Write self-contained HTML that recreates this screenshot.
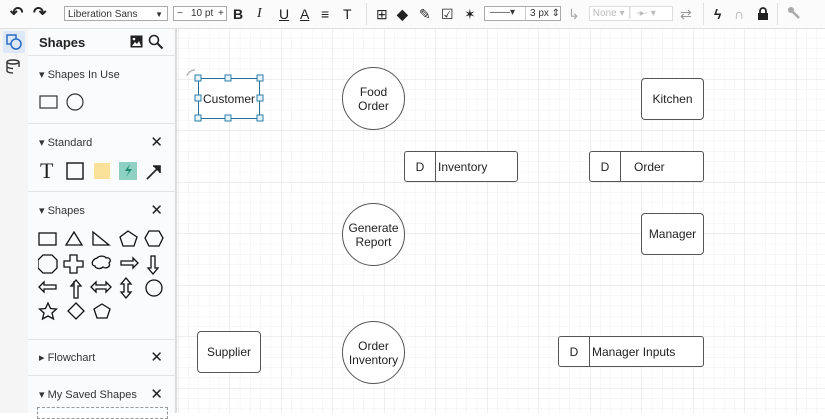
<!DOCTYPE html><html><head><style>
body{margin:0;width:825px;height:413px;overflow:hidden;font-family:"Liberation Sans",sans-serif;background:#fff;position:relative}
.tb{position:absolute;left:0;top:0;width:825px;height:28px;background:#fbfbfb;border-bottom:1px solid #e0e0e0}
.a{position:absolute}
.ico{position:absolute;top:6px;font-size:14px;color:#222;font-weight:bold}
.rail{position:absolute;left:0;top:29px;width:28px;height:384px;background:#f5f5f5;border-right:1px solid #e4e4e4}
.panel{position:absolute;left:28px;top:29px;width:147px;height:384px;background:#fafbfc;border-right:2px solid #dcdcdc}
.sec{position:absolute;left:0;width:147px;border-top:1px solid #e3e3e3;font-size:11px;color:#333}
.x{position:absolute;right:12px;font-size:15px;color:#222}
.box{position:absolute;border:1.5px solid #555;border-radius:4px;background:#fff;font-size:12px;color:#222;display:flex;align-items:center;justify-content:center;box-sizing:border-box}
.circ{position:absolute;border:1.5px solid #555;border-radius:50%;background:#fff;font-size:12px;color:#222;display:flex;align-items:center;justify-content:center;text-align:center;line-height:14px;box-sizing:border-box}
.d{position:absolute;border:1.5px solid #555;border-radius:3px;background:#fff;font-size:12px;color:#222;box-sizing:border-box}
.d span{position:absolute;top:0;bottom:0;display:flex;align-items:center}
</style></head><body>
<svg class="a" style="left:177px;top:29px" width="648" height="384">
<defs><pattern id="m" x="1.5" y="-1" width="10.3" height="10.3" patternUnits="userSpaceOnUse"><path d="M10.3 0V10.3H0" fill="none" stroke="#efefef" stroke-width="1"/></pattern>
<pattern id="M" x="1.5" y="-1" width="51.5" height="51.5" patternUnits="userSpaceOnUse"><path d="M51.5 0V51.5H0" fill="none" stroke="#dedede" stroke-width="1"/></pattern></defs>
<rect width="648" height="384" fill="url(#m)"/><rect width="648" height="384" fill="url(#M)"/></svg>
<div class="tb">
<span class="ico" style="left:10px;font-size:16px;top:3px">↶</span><span class="ico" style="left:33px;font-size:16px;top:3px">↷</span>
<div class="a" style="left:64px;top:6px;width:104px;height:15px;border:1px solid #aaa;background:#fff;font-size:10px;color:#333;line-height:15px;padding-left:3px;box-sizing:border-box">Liberation Sans<span style="position:absolute;right:4px;font-size:8px">▼</span></div>
<div class="a" style="left:173px;top:6px;width:54px;height:15px;border:1px solid #aaa;background:#fff;font-size:10px;color:#333;line-height:14px;box-sizing:border-box"><span style="position:absolute;left:3px">−</span><span style="position:absolute;left:17px">10 pt</span><span style="position:absolute;left:44px">+</span></div>
<span class="ico" style="left:233px">B</span><span class="ico" style="left:257px;font-style:italic;font-weight:normal;font-family:'Liberation Serif'">I</span><span class="ico" style="left:279px;text-decoration:underline;font-weight:normal">U</span><span class="ico" style="left:300px;font-weight:normal;text-decoration:underline">A</span><span class="ico" style="left:321px;font-weight:normal">≡</span><span class="ico" style="left:343px;font-weight:normal">T</span>
<div class="a" style="left:366px;top:3px;width:1px;height:22px;background:#e0e0e0"></div>
<span class="ico" style="left:376px;font-weight:normal">⊞</span><span class="ico" style="left:397px">◆</span><span class="ico" style="left:419px;font-weight:normal">✎</span><span class="ico" style="left:441px;font-weight:normal">☑</span><span class="ico" style="left:464px;font-weight:normal">✶</span>
<div class="a" style="left:484px;top:6px;width:77px;height:15px;border:1px solid #aaa;background:#fff;font-size:10px;color:#333;line-height:14px;box-sizing:border-box;white-space:nowrap;overflow:hidden"><span style="position:absolute;left:5px;top:-1px">——▾</span><span style="position:absolute;left:40px;top:0;bottom:0;border-left:1px solid #ccc;padding-left:4px">3 px ⇕</span></div>
<span class="ico" style="left:568px;color:#aaa;font-weight:normal">↳</span>
<div class="a" style="left:589px;top:6px;width:84px;height:15px;border:1px solid #ddd;background:#fff;font-size:10px;color:#bbb;line-height:14px;box-sizing:border-box;white-space:nowrap">&nbsp;None ▾ │ -▸- ▾</div>
<span class="ico" style="left:680px;color:#999;font-weight:normal">⇄</span>
<div class="a" style="left:703px;top:3px;width:1px;height:22px;background:#e0e0e0"></div>
<span class="ico" style="left:714px">ϟ</span><span class="ico" style="left:734px;color:#aaa">∩</span>
<svg class="a" style="left:757px;top:7px" width="12" height="14"><path d="M3 6V4a3 3 0 0 1 6 0v2" fill="none" stroke="#222" stroke-width="1.8"/><rect x="1" y="6" width="10" height="7" fill="#222"/></svg>
<div class="a" style="left:777px;top:3px;width:1px;height:22px;background:#e0e0e0"></div>
<svg class="a" style="left:787px;top:6px" width="16" height="16"><path d="M3 3l9 9" stroke="#aaa" stroke-width="2.5"/><circle cx="4" cy="4" r="3" fill="#aaa"/></svg>
</div>
<div class="rail"><div class="a" style="left:3px;top:2px;width:22px;height:22px;background:#dce8f5;border-radius:2px"></div>
<svg class="a" style="left:6px;top:5px" width="16" height="16"><rect x="1" y="1" width="9" height="9" fill="none" stroke="#2a6cc4" stroke-width="1.5"/><circle cx="10" cy="10" r="5" fill="#dce8f5" stroke="#2a6cc4" stroke-width="1.5"/></svg>
<svg class="a" style="left:6px;top:30px" width="16" height="16"><ellipse cx="7" cy="3" rx="6" ry="2" fill="none" stroke="#333" stroke-width="1.4"/><path d="M1 3v9c0 1 3 2 6 2M13 3v5M1 7.5c0 1 3 2 6 2" fill="none" stroke="#333" stroke-width="1.4"/></svg>
</div>
<div class="panel">
<div class="a" style="left:11px;top:6px;font-size:13px;font-weight:bold;color:#222">Shapes</div>
<svg class="a" style="left:102px;top:6px" width="13" height="13"><rect x="0.5" y="0.5" width="12" height="12" fill="#222"/><path d="M2 11l3-4 2 2 2-3 2 5z" fill="#fff"/><circle cx="4" cy="4" r="1.3" fill="#fff"/></svg>
<svg class="a" style="left:120px;top:5px" width="16" height="16"><circle cx="6" cy="6" r="4.5" fill="none" stroke="#222" stroke-width="1.6"/><path d="M9.5 9.5l5 5" stroke="#222" stroke-width="2"/></svg>
<div class="sec" style="top:26px;height:68px"><div class="a" style="left:11px;top:12px">▾ Shapes In Use</div>
<svg class="a" style="left:11px;top:37px" width="60" height="20"><rect x="1" y="3" width="17" height="12" fill="none" stroke="#333" stroke-width="1.2"/><circle cx="36" cy="9" r="8" fill="none" stroke="#333" stroke-width="1.2"/></svg></div>
<div class="sec" style="top:94px;height:68px"><div class="a" style="left:11px;top:12px">▾ Standard</div><span class="x" style="top:9px">✕</span>
<svg class="a" style="left:11px;top:37px" width="130" height="22"><text x="1" y="17" font-family="Liberation Serif" font-size="22" fill="#222">T</text><rect x="28" y="2" width="16" height="16" fill="none" stroke="#222" stroke-width="1.5"/><rect x="55" y="2" width="16" height="16" fill="#fbe29a"/><rect x="80" y="1" width="18" height="18" fill="#8fd0c4"/><path d="M91 3l-5 7h4l-3 6 6-8h-4z" fill="#1a8c6c"/><path d="M108 18l12-12M114 5h7v7" stroke="#222" stroke-width="1.6" fill="#222"/></svg></div>
<div class="sec" style="top:162px;height:148px"><div class="a" style="left:11px;top:12px">▾ Shapes</div><span class="x" style="top:9px">✕</span>
<svg class="a" style="left:10px;top:36px" width="130" height="100" fill="none" stroke="#111" stroke-width="1.3">
<rect x="1" y="5" width="17" height="12"/><path d="M28 17l8-13 8 13z"/><path d="M55 4v13h16z"/><path d="M90 3l9 6-3 9h-11l-3-9z"/><path d="M111 3h10l4 7-4 8h-10l-4-8z"/>
<path d="M5 27h9l5 5v8l-5 5h-9l-5-5v-8z"/><path d="M32 27h7v6h6v6h-6v6h-7v-6h-6v-6h6z"/><path d="M59 30c3-3 8-2 9 0 3-1 6 2 3 5 2 4-3 6-6 4-3 3-8 1-8-1-4 0-4-6 2-8z"/><path d="M83 33h12v-3l5 5-5 5v-3h-12z"/><path d="M113 28h4v12h3l-5 6-5-6h3z"/>
<path d="M18 57h-12v-3l-5 5 5 5v-3h12z"/><path d="M36 53v17h4v-12h3l-5-6-5 6h3z"/><path d="M58 57h10v-3l5 5-5 5v-3h-10v3l-5-5 5-5z"/><path d="M90 55v8h3l-5 6-5-6h3v-8h-3l5-6 5 6z" transform="translate(0,1)"/><circle cx="116" cy="60" r="8"/>
<path d="M10 75l2.5 5.5 6 .5-4.5 4 1.5 6-5.5-3-5.5 3 1.5-6-4.5-4 6-.5z"/><path d="M38 75l8 8-8 8-8-8z"/><path d="M64 76l8 5-3 9h-10l-3-9z"/></svg></div>
<div class="sec" style="top:310px;height:36px"><div class="a" style="left:11px;top:11px">▸ Flowchart</div><span class="x" style="top:8px">✕</span></div>
<div class="sec" style="top:346px;height:38px"><div class="a" style="left:11px;top:12px">▾ My Saved Shapes</div><span class="x" style="top:9px">✕</span>
<div class="a" style="left:9px;top:31px;width:129px;height:10px;border:1px dashed #999"></div></div>
</div>
<div class="box" style="left:198px;top:78px;width:62px;height:41px;border-color:#2a6f95;border-radius:0">Customer</div>
<svg class="a" style="left:184px;top:64px" width="82" height="62" fill="#e6f3fa" stroke="#2a7fa8" stroke-width="1">
<path d="M3 12a8 8 0 0 1 8-6" fill="none" stroke="#bbb" stroke-width="1.5"/>
<rect x="11" y="11" width="6" height="6"/><rect x="41" y="11" width="6" height="6"/><rect x="73" y="11" width="6" height="6"/><rect x="11" y="31" width="6" height="6"/><rect x="73" y="31" width="6" height="6"/><rect x="11" y="51" width="6" height="6"/><rect x="41" y="51" width="6" height="6"/><rect x="73" y="51" width="6" height="6"/></svg>
<div class="circ" style="left:342px;top:67px;width:63px;height:63px">Food<br>Order</div>
<div class="circ" style="left:342px;top:203px;width:63px;height:63px">Generate<br>Report</div>
<div class="circ" style="left:342px;top:321px;width:63px;height:63px">Order<br>Inventory</div>
<div class="box" style="left:641px;top:78px;width:63px;height:42px">Kitchen</div>
<div class="box" style="left:641px;top:213px;width:63px;height:42px">Manager</div>
<div class="box" style="left:197px;top:331px;width:64px;height:42px">Supplier</div>
<div class="d" style="left:404px;top:151px;width:114px;height:31px"><span style="left:0;width:30px;justify-content:center;border-right:1.5px solid #555">D</span><span style="left:33px">Inventory</span></div>
<div class="d" style="left:589px;top:151px;width:115px;height:31px"><span style="left:0;width:30px;justify-content:center;border-right:1.5px solid #555">D</span><span style="left:44px">Order</span></div>
<div class="d" style="left:558px;top:336px;width:146px;height:31px"><span style="left:0;width:30px;justify-content:center;border-right:1.5px solid #555">D</span><span style="left:33px">Manager Inputs</span></div>
</body></html>
